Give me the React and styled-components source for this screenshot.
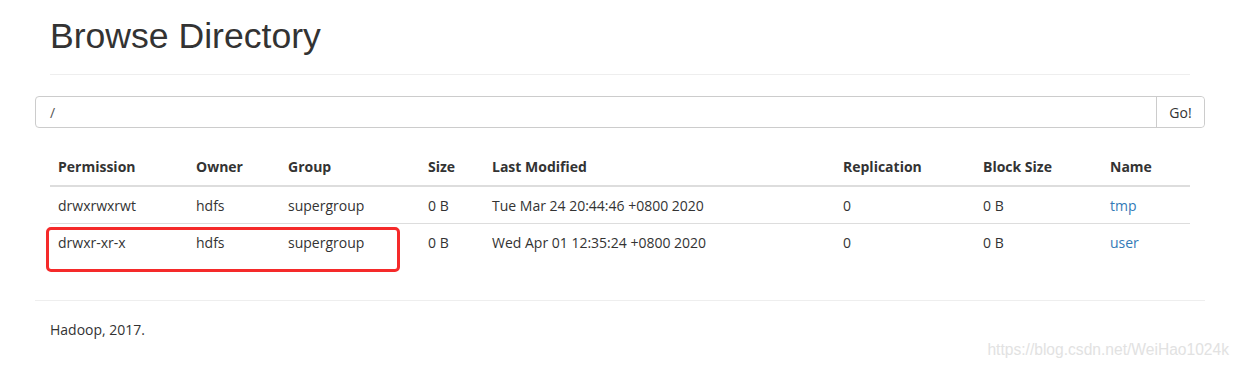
import styled, { createGlobalStyle } from 'styled-components'

const Global = createGlobalStyle`
  html, body {
    margin: 0;
    background: #fff;
  }
  body {
    font-family: "Open Sans", "Noto Sans", sans-serif;
    font-size: 14px;
    color: #333;
  }
`

const Page = styled.div`
  position: relative;
  width: 1239px;
  height: 369px;
  overflow: hidden;
`

const Container = styled.div`
  width: 1170px;
  margin-left: 35px;
`

const Inner = styled.div`
  padding: 0 15px;
`

const PageHeader = styled.div`
  padding-top: 16px;
  padding-bottom: 18px;
  border-bottom: 1px solid #eee;
`

const Title = styled.h1`
  margin: 0;
  font-family: "Liberation Sans", Arial, sans-serif;
  font-weight: 400;
  font-size: 35.6px;
  line-height: 40px;
  color: #333;
`

const InputGroup = styled.div`
  display: flex;
  margin-top: 21px;
  height: 32px;
  box-sizing: border-box;
  border: 1px solid #ccc;
  border-radius: 4px;
`

const PathInput = styled.div`
  flex: 1;
  display: flex;
  align-items: center;
  padding: 0 14px;
  color: #555;
`

const GoButton = styled.button`
  width: 48px;
  border: 0;
  border-left: 1px solid #ccc;
  background: #fff;
  border-radius: 0 4px 4px 0;
  font-family: inherit;
  font-size: 14px;
  color: #333;
  padding: 0;
`

const Table = styled.table`
  width: 100%;
  margin-top: 21px;
  margin-bottom: 40px;
  border-collapse: collapse;
  table-layout: fixed;
`

const Th = styled.th`
  text-align: left;
  font-weight: 700;
  padding: 8px;
  line-height: 20px;
  border-bottom: 2px solid #ddd;
  white-space: nowrap;
`

const Td = styled.td`
  padding: 9px 8px 7px;
  line-height: 20px;
  border-top: 1px solid #ddd;
  white-space: nowrap;
`

const Link = styled.a`
  color: #337ab7;
  text-decoration: none;
`

const Rule = styled.hr`
  margin: 0 0 19px;
  border: 0;
  border-top: 1px solid #eee;
`

const Footer = styled.p`
  margin: 0;
  line-height: 20px;
`

const Highlight = styled.div`
  position: absolute;
  left: 46px;
  top: 227px;
  width: 354px;
  height: 45px;
  box-sizing: border-box;
  border: 3px solid #f52a2a;
  border-radius: 5px;
`

const Watermark = styled.div`
  position: absolute;
  right: 10px;
  top: 341px;
  font-family: "Liberation Sans", Arial, sans-serif;
  font-size: 15.6px;
  color: #e2e2e2;
`

const widths = [138, 92, 140, 64, 351, 140, 127, 88]
const headers = ['Permission', 'Owner', 'Group', 'Size', 'Last Modified', 'Replication', 'Block Size', 'Name']

const rows = [
  ['drwxrwxrwt', 'hdfs', 'supergroup', '0 B', 'Tue Mar 24 20:44:46 +0800 2020', '0', '0 B', 'tmp'],
  ['drwxr-xr-x', 'hdfs', 'supergroup', '0 B', 'Wed Apr 01 12:35:24 +0800 2020', '0', '0 B', 'user'],
]

export default function App() {
  return (
    <Page>
      <Global />
      <Container>
        <Inner>
          <PageHeader>
            <Title>Browse Directory</Title>
          </PageHeader>
        </Inner>

        <InputGroup>
          <PathInput>/</PathInput>
          <GoButton>Go!</GoButton>
        </InputGroup>

        <Inner>
          <Table>
            <colgroup>
              {widths.map((w, i) => <col key={i} style={{ width: w }} />)}
            </colgroup>
            <thead>
              <tr>
                {headers.map(h => <Th key={h}>{h}</Th>)}
              </tr>
            </thead>
            <tbody>
              {rows.map(r => (
                <tr key={r[7]}>
                  {r.slice(0, 7).map((c, i) => <Td key={i}>{c}</Td>)}
                  <Td><Link href="#">{r[7]}</Link></Td>
                </tr>
              ))}
            </tbody>
          </Table>
        </Inner>

        <Rule />
        <Inner>
          <Footer>Hadoop, 2017.</Footer>
        </Inner>
      </Container>

      <Highlight />
      <Watermark>https://blog.csdn.net/WeiHao1024k</Watermark>
    </Page>
  )
}
